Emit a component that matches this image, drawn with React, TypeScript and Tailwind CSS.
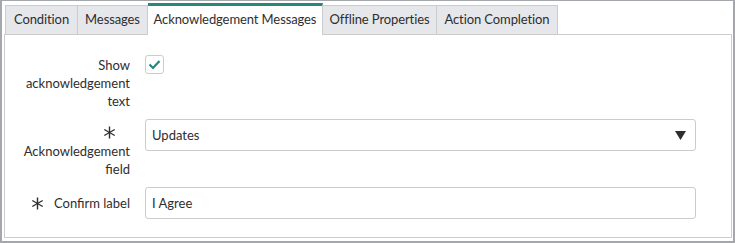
import React from "react";

const tabs = [
  { label: "Condition", w: "w-[73px]" },
  { label: "Messages", w: "w-[70px]" },
  { label: "Acknowledgement Messages", w: "w-[175px]", active: true },
  { label: "Offline Properties", w: "w-[114px]" },
  { label: "Action Completion", w: "w-[121px]" },
];

const Required = () => (
  <svg width="13" height="13" viewBox="0 0 13 13" className="inline-block">
    <g stroke="#2e2e2e" strokeWidth="1.4" strokeLinecap="butt">
      <line x1="6.5" y1="0.5" x2="6.5" y2="12.5" />
      <line x1="1.3" y1="3.5" x2="11.7" y2="9.5" />
      <line x1="1.3" y1="9.5" x2="11.7" y2="3.5" />
    </g>
  </svg>
);

const App = () => {
  return (
    <main className="w-[735px] h-[243px] bg-white border-t border-x-2 border-b-2 border-[#a4a8ac] pl-[2px] pr-px pt-px pb-[3px] flex flex-col font-['Lato','Liberation_Sans',sans-serif] text-[13px] text-[#2e2e2e]">
      {/* tab strip */}
      <div className="flex items-end h-[32px] pl-px">
        {tabs.map((t, i) =>
          t.active ? (
            <div
              key={t.label}
              className={`${t.w} h-[32px] -mb-px relative z-10 bg-white border-t-[3px] border-t-[#26877a] border-r border-[#cccccc] flex items-center justify-center pb-[2px] tracking-[-0.1px]`}
            >
              {t.label}
            </div>
          ) : (
            <div
              key={t.label}
              className={`${t.w} h-[29px] bg-[#e6e7ea] border-t border-r border-[#cccccc] ${i === 0 ? "border-l" : ""} flex items-center justify-center tracking-[-0.1px]`}
            >
              {t.label}
            </div>
          )
        )}
      </div>

      {/* panel */}
      <div className="flex-1 border border-[#cccccc] pt-[20px] pl-[13px] pr-[35px] flex flex-col gap-[9px] leading-[18px]">
        <div className="flex gap-[15px]">
          <div className="w-[112px] text-right pt-px">Show acknowledgement text</div>
          <div className="w-[19px] h-[19px] border border-[#cccccc] rounded-[3px] flex items-center justify-center">
            <svg width="13" height="11" viewBox="0 0 13 11">
              <path d="M1.5 5.5 L5 9 L11.5 2" fill="none" stroke="#26877a" strokeWidth="2.2" />
            </svg>
          </div>
        </div>

        <div className="flex gap-[15px]">
          <div className="w-[112px] text-right pt-[3px]">
            <div className="h-[20px] flex items-center justify-end pr-[14px]">
              <Required />
            </div>
            Acknowledgement field
          </div>
          <div className="flex-1 h-[32px] border border-[#cccccc] rounded-[3px] flex items-center justify-between pl-[6px] pr-[9px]">
            <span>Updates</span>
            <svg width="11" height="9" viewBox="0 0 11 9">
              <path d="M0 0 H11 L5.5 9 Z" fill="#2e2e2e" />
            </svg>
          </div>
        </div>

        <div className="flex gap-[15px] items-center">
          <div className="w-[112px] flex items-center justify-end gap-[10px]">
            <Required />
            <span>Confirm label</span>
          </div>
          <div className="flex-1 h-[32px] border border-[#cccccc] rounded-[3px] flex items-center pl-[6px]">
            I Agree
          </div>
        </div>
      </div>
    </main>
  );
};

export default App;
